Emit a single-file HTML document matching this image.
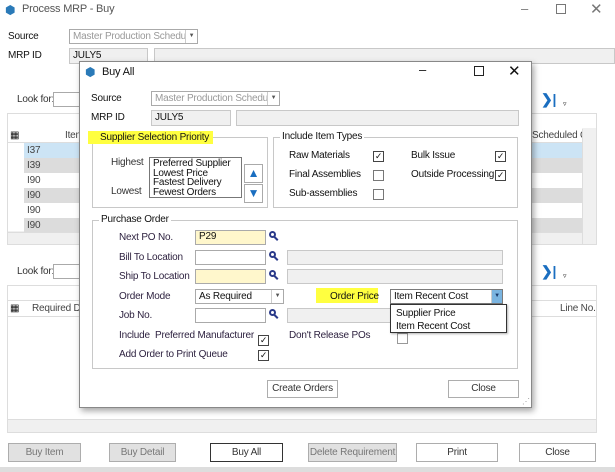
<!DOCTYPE html>
<html><head><meta charset="utf-8"><style>
*{box-sizing:border-box;margin:0;padding:0}
body{width:615px;height:472px;background:#fff;font-family:"Liberation Sans",sans-serif;font-size:10px;letter-spacing:-0.2px;color:#111;position:relative;overflow:hidden}
.a{position:absolute;white-space:nowrap}
.f{position:absolute;border:1px solid #aaa;background:#fff;white-space:nowrap;overflow:hidden}
.g{position:absolute;border:1px solid #c8c8c8;background:#f0f0f0;white-space:nowrap;overflow:hidden}
.y{background:#fff7cc}
.btn{position:absolute;border:1px solid #adadad;background:#e1e1e1;text-align:center;line-height:17px;color:#333;white-space:nowrap;overflow:hidden}
.cb{position:absolute;width:11px;height:11px;border:1px solid #444;background:#fff;font-size:9px;line-height:9px;text-align:center}
.grp{position:absolute;border:1px solid #c8c8c8}
.gt{position:absolute;background:#fff;padding:0 2px;top:-7px;left:6px;white-space:nowrap}
.dd{position:absolute;right:0;top:0;width:12px;height:100%;border-left:1px solid #ccc;font-size:6px;text-align:center;line-height:13px;color:#555;background:#fff}
.row{position:absolute;left:24px;width:558px;height:15px;padding-left:3px;line-height:15px;color:#444}
.mag{position:absolute;width:7px;height:7px;border:2px solid #2a3a8a;border-radius:50%}
.mag:after{content:"";position:absolute;width:2px;height:5px;background:#2a3a8a;left:4px;top:3px;transform:rotate(-45deg)}
.lbl{color:#2e2240}
</style></head><body>
<!-- main window -->
<div class="a" style="left:5px;top:3px;color:#2a7ab8;font-size:12px">&#x2B22;</div>
<div class="a" style="left:22px;top:3px;color:#555;font-size:11px">Process MRP - Buy</div>
<div class="a" style="left:521px;top:1px;color:#777;font-size:13px">&#x2013;</div>
<div class="a" style="left:556px;top:4px;width:10px;height:10px;border:1px solid #777"></div>
<div class="a" style="left:590px;top:0px;color:#777;font-size:15px">&#x2715;</div>
<div class="a" style="left:8px;top:31px">Source</div>
<div class="f" style="left:69px;top:29px;width:129px;height:15px;color:#999;padding-left:3px;line-height:13px">Master Production Schedule<div class="dd">&#9660;</div></div>
<div class="a" style="left:8px;top:50px">MRP ID</div>
<div class="g" style="left:69px;top:48px;width:79px;height:16px;padding-left:3px;line-height:13px">JULY5</div>
<div class="g" style="left:154px;top:48px;width:461px;height:16px"></div>
<div class="a" style="left:17px;top:94px;color:#333">Look for:</div>
<div class="f" style="left:53px;top:92px;width:30px;height:15px"></div>
<div class="a" style="left:541px;top:91px;color:#1a6ec0;font-weight:bold;font-size:14px">&#x276F;|</div>
<div class="a" style="left:563px;top:100px;font-size:7px">&#x25BF;</div>
<div class="a" style="left:7px;top:113px;width:590px;height:132px;border:1px solid #ddd;background:#f0f0f0"></div>
<div class="a" style="left:8px;top:114px;width:588px;height:14px;background:#fff"></div>
<div class="a" style="left:8px;top:128px;width:574px;height:15px;background:#fff;border-bottom:1px solid #ddd"></div>
<div class="a" style="left:10px;top:130px;font-size:10px">&#x25A6;</div>
<div class="a" style="left:65px;top:130px;color:#444">Item</div>
<div class="a" style="left:532px;top:130px;color:#444">Scheduled Qty</div>
<div class="row" style="top:143px;background:#cce4f5">I37</div>
<div class="a" style="left:12px;top:145px;font-size:8px">&#9654;</div>
<div class="row" style="top:158px;background:#dcdcdc">I39</div>
<div class="row" style="top:173px;background:#fff">I90</div>
<div class="row" style="top:188px;background:#dcdcdc">I90</div>
<div class="row" style="top:203px;background:#fff">I90</div>
<div class="row" style="top:218px;background:#dcdcdc">I90</div>
<div class="a" style="left:8px;top:143px;width:16px;height:88px;background:#fff"></div>
<div class="a" style="left:582px;top:129px;width:14px;height:115px;background:#f0f0f0;border-left:1px solid #ddd"></div>
<div class="a" style="left:8px;top:232px;width:574px;height:12px;background:#f0f0f0;border-top:1px solid #ddd"></div>
<div class="a" style="left:17px;top:266px;color:#333">Look for:</div>
<div class="f" style="left:53px;top:264px;width:30px;height:15px"></div>
<div class="a" style="left:541px;top:263px;color:#1a6ec0;font-weight:bold;font-size:14px">&#x276F;|</div>
<div class="a" style="left:563px;top:272px;font-size:7px">&#x25BF;</div>
<div class="a" style="left:7px;top:285px;width:590px;height:148px;border:1px solid #ddd;background:#fff"></div>
<div class="a" style="left:8px;top:300px;width:588px;height:17px;border-top:1px solid #ddd;border-bottom:1px solid #ddd"></div>
<div class="a" style="left:10px;top:303px;font-size:10px">&#x25A6;</div>
<div class="a" style="left:32px;top:303px;color:#444">Required Da</div>
<div class="a" style="left:560px;top:303px;color:#444">Line No.</div>
<div class="a" style="left:8px;top:419px;width:588px;height:13px;background:#f0f0f0;border-top:1px solid #ddd"></div>
<div class="btn" style="left:8px;top:443px;width:73px;height:19px;color:#777">Buy Item</div>
<div class="btn" style="left:109px;top:443px;width:67px;height:19px;color:#777">Buy Detail</div>
<div class="btn" style="left:210px;top:443px;width:73px;height:19px;border:1px solid #333;background:#fff">Buy All</div>
<div class="btn" style="left:308px;top:443px;width:89px;height:19px;color:#777">Delete Requirement</div>
<div class="btn" style="left:416px;top:443px;width:82px;height:19px;background:#fff">Print</div>
<div class="btn" style="left:519px;top:443px;width:77px;height:19px;background:#fff">Close</div>
<div class="a" style="left:0;top:467px;width:615px;height:5px;background:#ddd"></div>

<!-- dialog -->
<div class="a" style="left:79px;top:61px;width:453px;height:347px;background:#fff;border:1px solid #888;box-shadow:2px 3px 6px rgba(0,0,0,.35)"></div>
<div class="a" style="left:85px;top:65px;color:#2a7ab8;font-size:12px">&#x2B22;</div>
<div class="a" style="left:102px;top:66px;font-size:11px">Buy All</div>
<div class="a" style="left:419px;top:62px;font-size:13px">&#x2013;</div>
<div class="a" style="left:474px;top:66px;width:10px;height:10px;border:1px solid #222"></div>
<div class="a" style="left:508px;top:62px;font-size:15px">&#x2715;</div>
<div class="a" style="left:91px;top:93px">Source</div>
<div class="f" style="left:151px;top:91px;width:129px;height:15px;color:#999;padding-left:3px;line-height:13px">Master Production Schedule<div class="dd">&#9660;</div></div>
<div class="a" style="left:91px;top:112px">MRP ID</div>
<div class="g" style="left:151px;top:110px;width:80px;height:16px;padding-left:3px;line-height:13px">JULY5</div>
<div class="g" style="left:236px;top:110px;width:283px;height:16px"></div>

<div class="grp" style="left:92px;top:137px;width:176px;height:71px"></div>
<div class="a" style="left:88px;top:131px;width:125px;height:13px;background:#ffff40"></div>
<div class="a" style="left:100px;top:132px">Supplier Selection Priority</div>
<div class="a" style="left:111px;top:157px;color:#333">Highest</div>
<div class="a" style="left:111px;top:186px;color:#333">Lowest</div>
<div class="f" style="left:149px;top:157px;width:93px;height:41px;line-height:9.5px;padding-left:3px;padding-top:1px;border-color:#777">Preferred Supplier<br>Lowest Price<br>Fastest Delivery<br>Fewest Orders</div>
<div class="f" style="left:244px;top:164px;width:19px;height:19px;color:#1a6ec0;text-align:center;font-size:12px;line-height:17px">&#9650;</div>
<div class="f" style="left:244px;top:184px;width:19px;height:19px;color:#1a6ec0;text-align:center;font-size:12px;line-height:17px">&#9660;</div>

<div class="grp" style="left:273px;top:137px;width:245px;height:71px"><div class="gt">Include Item Types</div></div>
<div class="a" style="left:289px;top:150px">Raw Materials</div><div class="cb" style="left:373px;top:151px">&#10003;</div>
<div class="a" style="left:289px;top:169px">Final Assemblies</div><div class="cb" style="left:373px;top:170px;border-color:#777"></div>
<div class="a" style="left:289px;top:188px">Sub-assemblies</div><div class="cb" style="left:373px;top:189px;border-color:#777"></div>
<div class="a" style="left:411px;top:150px">Bulk Issue</div><div class="cb" style="left:495px;top:151px">&#10003;</div>
<div class="a" style="left:411px;top:169px">Outside Processing</div><div class="cb" style="left:495px;top:170px">&#10003;</div>

<div class="grp" style="left:92px;top:220px;width:426px;height:149px"><div class="gt">Purchase Order</div></div>
<div class="a lbl" style="left:119px;top:232px">Next PO No.</div>
<div class="f y" style="left:195px;top:230px;width:71px;height:15px;padding-left:3px;line-height:12px">P29</div>
<div class="mag" style="left:269px;top:231px"></div>
<div class="a lbl" style="left:119px;top:252px">Bill To Location</div>
<div class="f" style="left:195px;top:250px;width:71px;height:15px"></div>
<div class="mag" style="left:269px;top:251px"></div>
<div class="g" style="left:287px;top:250px;width:216px;height:15px"></div>
<div class="a lbl" style="left:119px;top:271px">Ship To Location</div>
<div class="f y" style="left:195px;top:269px;width:71px;height:15px"></div>
<div class="mag" style="left:269px;top:270px"></div>
<div class="g" style="left:287px;top:269px;width:216px;height:15px"></div>
<div class="a lbl" style="left:119px;top:291px">Order Mode</div>
<div class="f" style="left:195px;top:289px;width:89px;height:15px;padding-left:3px;line-height:13px">As Required<div class="dd">&#9660;</div></div>
<div class="a" style="left:316px;top:288px;width:62px;height:15px;background:#ffff40"></div>
<div class="a" style="left:330px;top:291px">Order Price</div>
<div class="f" style="left:390px;top:289px;width:113px;height:15px;padding-left:3px;line-height:13px;border-color:#7a7a7a">Item Recent Cost<div class="dd" style="background:#7ab4e0;color:#1a3a6a;width:11px">&#9660;</div></div>
<div class="a lbl" style="left:119px;top:310px">Job No.</div>
<div class="f" style="left:195px;top:308px;width:71px;height:15px"></div>
<div class="mag" style="left:269px;top:309px"></div>
<div class="g" style="left:287px;top:308px;width:110px;height:15px"></div>
<div class="a lbl" style="left:119px;top:330px">Include&nbsp; Preferred Manufacturer</div>
<div class="cb" style="left:258px;top:335px">&#10003;</div>
<div class="a lbl" style="left:289px;top:330px">Don't Release POs</div>
<div class="cb" style="left:397px;top:333px;border-color:#999"></div>
<div class="a lbl" style="left:119px;top:349px">Add Order to Print Queue</div>
<div class="cb" style="left:258px;top:350px">&#10003;</div>
<div class="a" style="left:390px;top:304px;width:117px;height:29px;background:#fff;border:1px solid #333;box-shadow:1px 1px 2px rgba(0,0,0,.3);padding:2px 0 0 5px;line-height:13px">Supplier Price<br>Item Recent Cost</div>

<div class="btn" style="left:267px;top:380px;width:71px;height:18px;background:#fff;line-height:16px">Create Orders</div>
<div class="btn" style="left:448px;top:380px;width:71px;height:18px;background:#fff;line-height:16px">Close</div>
<div class="a" style="left:522px;top:397px;color:#999;font-size:8px">&#x22F0;</div>
</body></html>
